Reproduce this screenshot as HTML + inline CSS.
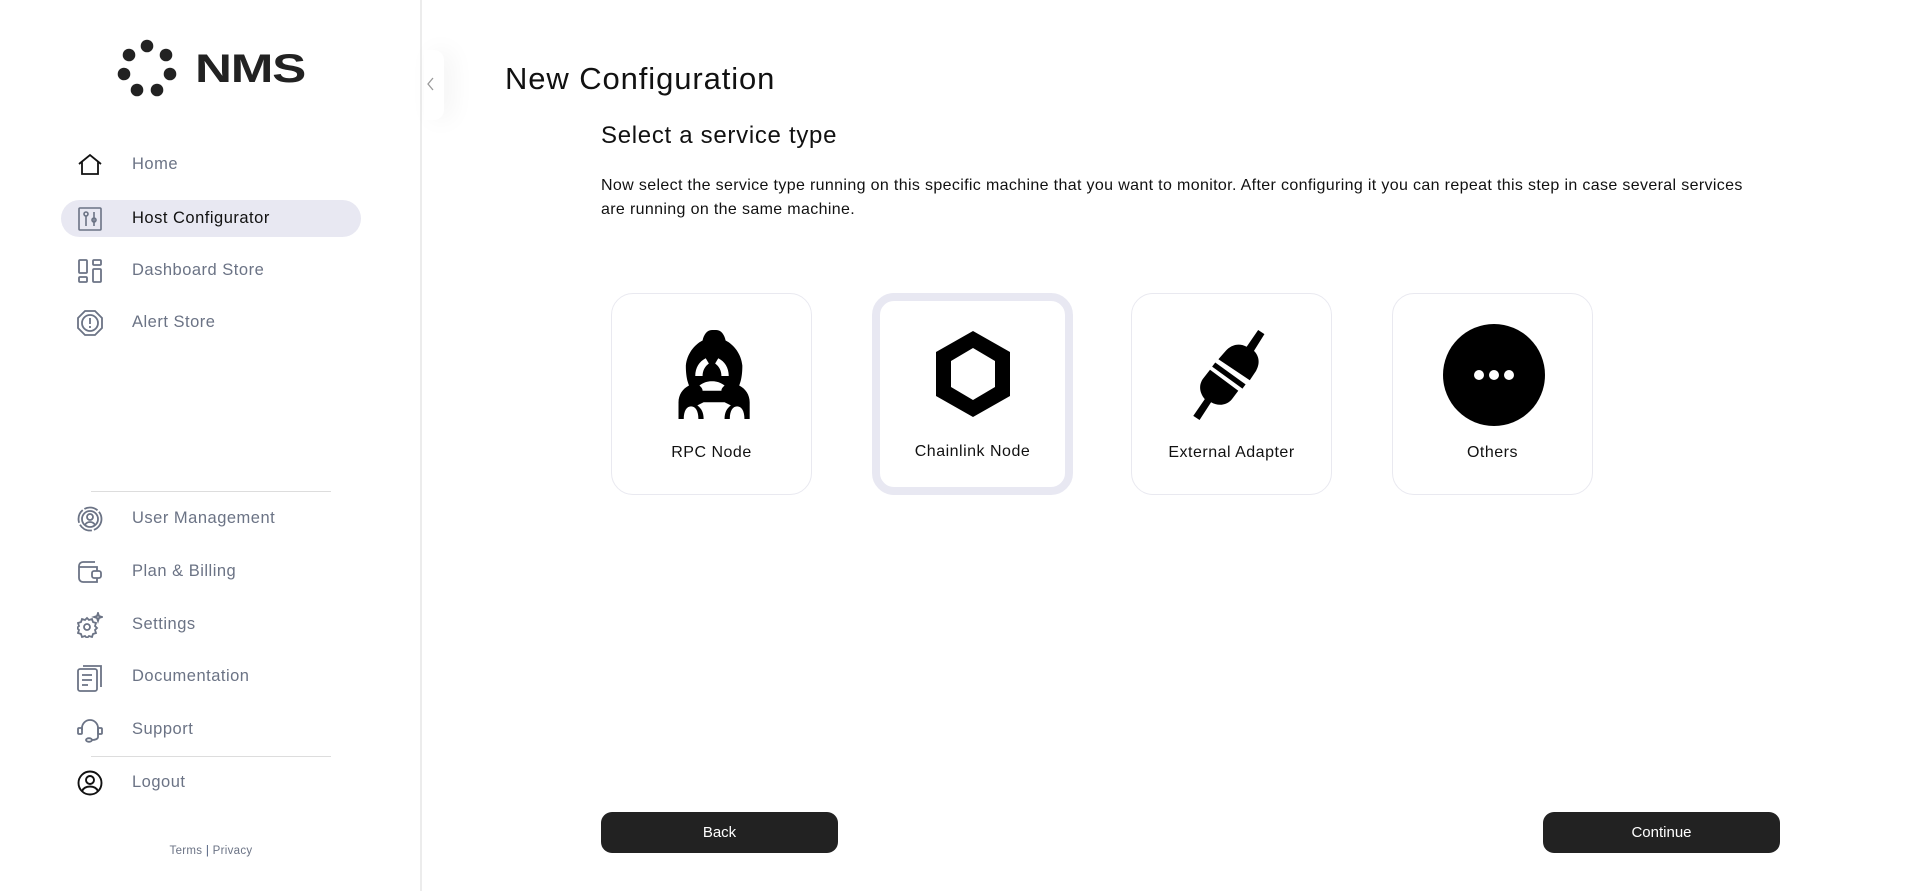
<!DOCTYPE html>
<html><head><meta charset="utf-8"><style>
*{box-sizing:border-box;margin:0;padding:0}
body{width:1919px;height:891px;background:#fff;font-family:"Liberation Sans",sans-serif;position:relative;overflow:hidden;color:#111}
.side{position:absolute;left:0;top:0;width:422px;height:891px;border-right:2px solid #ececec}
.nav{position:absolute;left:61px;width:300px;height:37px;display:flex;align-items:center;font-size:16.5px;letter-spacing:0.5px;color:#6b7385}
.nav svg{position:absolute;left:16px;top:6px}
.nav span{position:absolute;left:71px}
.sel{background:#e8e8f2;border-radius:19px;color:#111;font-weight:500}
.hr{position:absolute;left:91px;width:240px;height:1px;background:#ddd}
.card{position:absolute;top:293px;width:201px;height:202px;border:1px solid #e9e9f0;border-radius:22px;background:#fff}
.card .lb{position:absolute;top:150px;width:100%;text-align:center;font-size:16px;letter-spacing:0.5px;color:#111}
.card svg{position:absolute;left:58px;top:38px}
.btn{position:absolute;top:812px;width:237px;height:41px;background:#222;border-radius:11px;color:#fff;font-size:15px;text-align:center;line-height:41px}
</style></head><body>
<div class="side">
<svg style="position:absolute;left:110px;top:35px" width="70" height="65"><g fill="#222"><circle cx="37" cy="11" r="6.3"/><circle cx="19" cy="20" r="6.3"/><circle cx="56" cy="20" r="6.3"/><circle cx="14" cy="39" r="6.3"/><circle cx="60" cy="39" r="6.3"/><circle cx="27" cy="55" r="6.3"/><circle cx="47" cy="55" r="6.3"/></g></svg>
<div style="position:absolute;left:195px;top:49px;font-size:40px;font-weight:bold;color:#222;letter-spacing:-1px;transform:scaleX(1.28);transform-origin:left;line-height:40px">NMS</div>
<div class="nav" style="top:146px"><svg width="26" height="26" viewBox="0 0 26 26" fill="none" stroke="#111" stroke-width="1.8"><path d="M2 12L13 3l11 9M5 10v12h16V10"/></svg><span>Home</span></div>
<div class="nav sel" style="top:200px"><svg width="26" height="26" viewBox="0 0 26 26" fill="none" stroke="#6b7385" stroke-width="1.6"><rect x="2" y="2" width="22" height="22" rx="1"/><circle cx="9" cy="8" r="2"/><path d="M9 10v10M17 6v14"/><circle cx="17" cy="14" r="2"/></svg><span>Host Configurator</span></div>
<div class="nav" style="top:252px"><svg width="26" height="26" viewBox="0 0 26 26" fill="none" stroke="#6b7385" stroke-width="1.8"><rect x="2" y="2" width="8" height="13" rx="1"/><rect x="2" y="19" width="8" height="5" rx="1"/><rect x="16" y="2" width="8" height="5" rx="1"/><rect x="16" y="11" width="8" height="13" rx="1"/></svg><span>Dashboard Store</span></div>
<div class="nav" style="top:304px"><svg width="26" height="26" viewBox="0 0 26 26" fill="none" stroke="#6b7385" stroke-width="1.8"><path d="M8 1h10l7 7v10l-7 7H8l-7-7V8z"/><circle cx="13" cy="13" r="8"/><path d="M13 8v6M13 16v2"/></svg><span>Alert Store</span></div>
<div class="hr" style="top:491px"></div>
<div class="nav" style="top:500px"><svg width="26" height="26" viewBox="0 0 26 26" fill="none" stroke="#6b7385" stroke-width="1.8"><circle cx="13" cy="13" r="11.5" stroke-dasharray="14 2"/><circle cx="13" cy="13" r="8"/><circle cx="13" cy="11" r="3"/><path d="M8 19c2-4 8-4 10 0"/></svg><span>User Management</span></div>
<div class="nav" style="top:553px"><svg width="26" height="26" viewBox="0 0 26 26" fill="none" stroke="#6b7385" stroke-width="1.8"><path d="M18 3H6a4 4 0 0 0-4 4v12a4 4 0 0 0 4 4h14v-4M2 8h18v4"/><rect x="15" y="12" width="9" height="7" rx="2"/></svg><span>Plan &amp; Billing</span></div>
<div class="nav" style="top:606px"><svg width="26" height="26" viewBox="0 0 26 26" fill="none" stroke="#6b7385" stroke-width="1.8"><circle cx="10" cy="15" r="3"/><path d="M10 6l2 2 3-1 1 3 3 1-1 3 2 2-2 2 1 3-3 1-1 3-3-1-2 2-2-2-3 1-1-3-3-1 1-3-2-2 2-2-1-3 3-1 1-3 3 1z"/><path d="M21 1l1 3 3 1-3 1-1 3-1-3-3-1 3-1z"/></svg><span>Settings</span></div>
<div class="nav" style="top:658px"><svg width="26" height="28" viewBox="0 0 26 28" fill="none" stroke="#6b7385" stroke-width="1.8"><rect x="1" y="5" width="19" height="22" rx="2"/><path d="M6 2h18v21M5 11h10M5 16h10M5 21h6"/></svg><span>Documentation</span></div>
<div class="nav" style="top:711px"><svg width="26" height="26" viewBox="0 0 26 26" fill="none" stroke="#6b7385" stroke-width="1.8"><path d="M5 13V11a8 8 0 0 1 16 0v9"/><rect x="1" y="11" width="4" height="6" rx="1"/><rect x="21" y="11" width="4" height="6" rx="1"/><path d="M21 20c0 2-3 3-6 3"/><ellipse cx="12" cy="23" rx="3" ry="1.8"/></svg><span>Support</span></div>
<div class="hr" style="top:756px"></div>
<div class="nav" style="top:764px"><svg width="26" height="26" viewBox="0 0 26 26" fill="none" stroke="#111" stroke-width="1.9"><circle cx="13" cy="13" r="11.5"/><circle cx="13" cy="10" r="4"/><path d="M5 21c3-6 13-6 16 0"/></svg><span>Logout</span></div>
<div style="position:absolute;left:0;width:422px;top:845px;text-align:center;font-size:11.5px;letter-spacing:0.3px;color:#6b7385">Terms <span style="color:#4a5a7a">|</span> Privacy</div>
</div>
<div style="position:absolute;left:424px;top:50px;width:20px;height:70px;background:#fff;border-radius:0 10px 10px 0;box-shadow:8px 0 24px rgba(0,0,0,0.05)"></div>
<svg style="position:absolute;left:426px;top:77px" width="10" height="14"><path d="M7 1L2 7l5 6" fill="none" stroke="#999" stroke-width="1.3"/></svg>
<div style="position:absolute;left:505px;top:61px;font-size:31px;letter-spacing:0.9px;color:#111">New Configuration</div>
<div style="position:absolute;left:601px;top:122px;font-size:24px;letter-spacing:0.7px;color:#111">Select a service type</div>
<div style="position:absolute;left:601px;top:174px;width:1150px;font-size:16px;letter-spacing:0.35px;line-height:24px;color:#111">Now select the service type running on this specific machine that you want to monitor. After configuring it you can repeat this step in case several services are running on the same machine.</div>
<div class="card" style="left:611px"><svg style="left:55px;top:36px" width="90" height="90" viewBox="0 0 86 86"><g fill="#000"><path d="M43 0c-5 0-8 5-9 10-8 4-15 13-16 24 0 8 1 14 3 19-6 3-10 9-10 16v16h5c0-8 3-12 7-12s7 4 7 12h5c0-6-2-10-6-13l6-3h20l6 3c-4 3-6 7-6 13h5c0-8 3-12 7-12s7 4 7 12h5V69c0-7-4-13-10-16 2-5 3-11 3-19-1-11-8-20-16-24-1-5-4-10-9-10zM27 44c0-8 4-14 10-17l3 5c-4 3-6 7-6 12h-7v0zm32 0h-7c0-5-2-9-6-12l3-5c6 3 10 9 10 17zM31 53c4-3 8-4 12-4s8 1 12 4c-2 2-3 3-3 5H34c0-2-1-3-3-5z"/></g></svg><div class="lb">RPC Node</div></div>
<div class="card" style="left:872px;width:201px;border:8px solid #e8e8f2"><svg style="left:53px;top:30px" width="80" height="86" viewBox="0 0 80 86"><path d="M40 0L77 21v44L40 86 3 65V21zM40 17L18 30v26l22 13 22-13V30z" fill="#000" fill-rule="evenodd"/></svg><div class="lb" style="top:142px">Chainlink Node</div></div>
<div class="card" style="left:1131px"><svg style="left:55px;top:36px" width="90" height="90" viewBox="0 0 86 86"><g fill="#000"><path d="M68 0l6 4-10 16c5 5 6 12 2 19l-6 9L30 28l7-8c5-6 13-8 20-4z"/><path d="M27 31l29 21-3 4-29-21z"/><path d="M22 38l27 20-6 8c-5 6-13 7-20 3L12 86l-6-4 11-16c-5-6-6-13-2-19z"/></g></svg><div class="lb">External Adapter</div></div>
<div class="card" style="left:1392px"><svg style="left:50px;top:30px" width="102" height="102" viewBox="0 0 102 102"><circle cx="51" cy="51" r="51" fill="#000"/><circle cx="36" cy="51" r="5" fill="#fff"/><circle cx="51" cy="51" r="5" fill="#fff"/><circle cx="66" cy="51" r="5" fill="#fff"/></svg><div class="lb">Others</div></div>
<div class="btn" style="left:601px">Back</div>
<div class="btn" style="left:1543px">Continue</div>
</body></html>
